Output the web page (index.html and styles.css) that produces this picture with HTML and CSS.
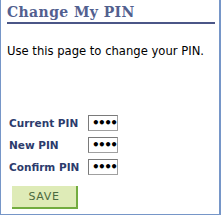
FILE: index.html
```html
<!DOCTYPE html>
<html>
<head>
<meta charset="utf-8">
<link rel="stylesheet" href="styles.css">
</head>
<body>
<div class="panel">
  <h1 class="title">Change My PIN</h1>
  <p class="intro">Use this page to change your PIN.</p>
  <div class="form">
    <div class="row"><span class="label">Current PIN</span><span class="pin">••••</span></div>
    <div class="row"><span class="label">New PIN</span><span class="pin">••••</span></div>
    <div class="row"><span class="label">Confirm PIN</span><span class="pin">••••</span></div>
  </div>
  <div class="actions"><button class="save">SAVE</button></div>
</div>
</body>
</html>
```
FILE: styles.css
```css
html, body { margin: 0; padding: 0; background: #fff; }
.panel {
  width: 221px;
  height: 215px;
  box-sizing: border-box;
  border-left: 1px solid #7696c8;
  border-right: 2px solid #7696c8;
  border-bottom: 1px solid #7696c8;
  padding: 0 4px 0 6px;
  font-family: "DejaVu Sans", Verdana, sans-serif;
}
.title {
  margin: 0;
  padding-top: 3px;
  height: 19px;
  font-family: "DejaVu Serif", Georgia, serif;
  font-weight: bold;
  font-size: 14px;
  line-height: 19px;
  color: #52608f;
  border-bottom: 2px solid #4b5687;
  letter-spacing: 0.4px;
}
.intro {
  margin: 20px 0 0 0;
  font-size: 11.6px;
  line-height: 14px;
  color: #000;
}
.form {
  margin-top: 57px;
  display: flex;
  flex-direction: column;
  gap: 6px;
}
.row {
  display: flex;
  align-items: center;
  height: 16px;
}
.label {
  width: 79px;
  padding-left: 2px;
  font-size: 10.5px;
  font-weight: bold;
  color: #2c3b6c;
}
.pin {
  box-sizing: border-box;
  width: 30px;
  height: 16px;
  border: 1px solid #a0a0a0;
  border-top-color: #7a7a7a;
  border-left-color: #7a7a7a;
  font-size: 12px;
  font-weight: bold;
  line-height: 14px;
  letter-spacing: -1.6px;
  padding-left: 3px;
  color: #000;
}
.actions { margin-top: 10px; padding-left: 5px; }
.save {
  width: 66px;
  height: 23px;
  margin: 0;
  padding: 0;
  background: #deebb7;
  border: none;
  border-right: 2px solid #72ac3f;
  border-bottom: 2px solid #72ac3f;
  font-family: "DejaVu Sans", Verdana, sans-serif;
  font-size: 11px;
  color: #4b6a3e;
  letter-spacing: 0.6px;
}
```
